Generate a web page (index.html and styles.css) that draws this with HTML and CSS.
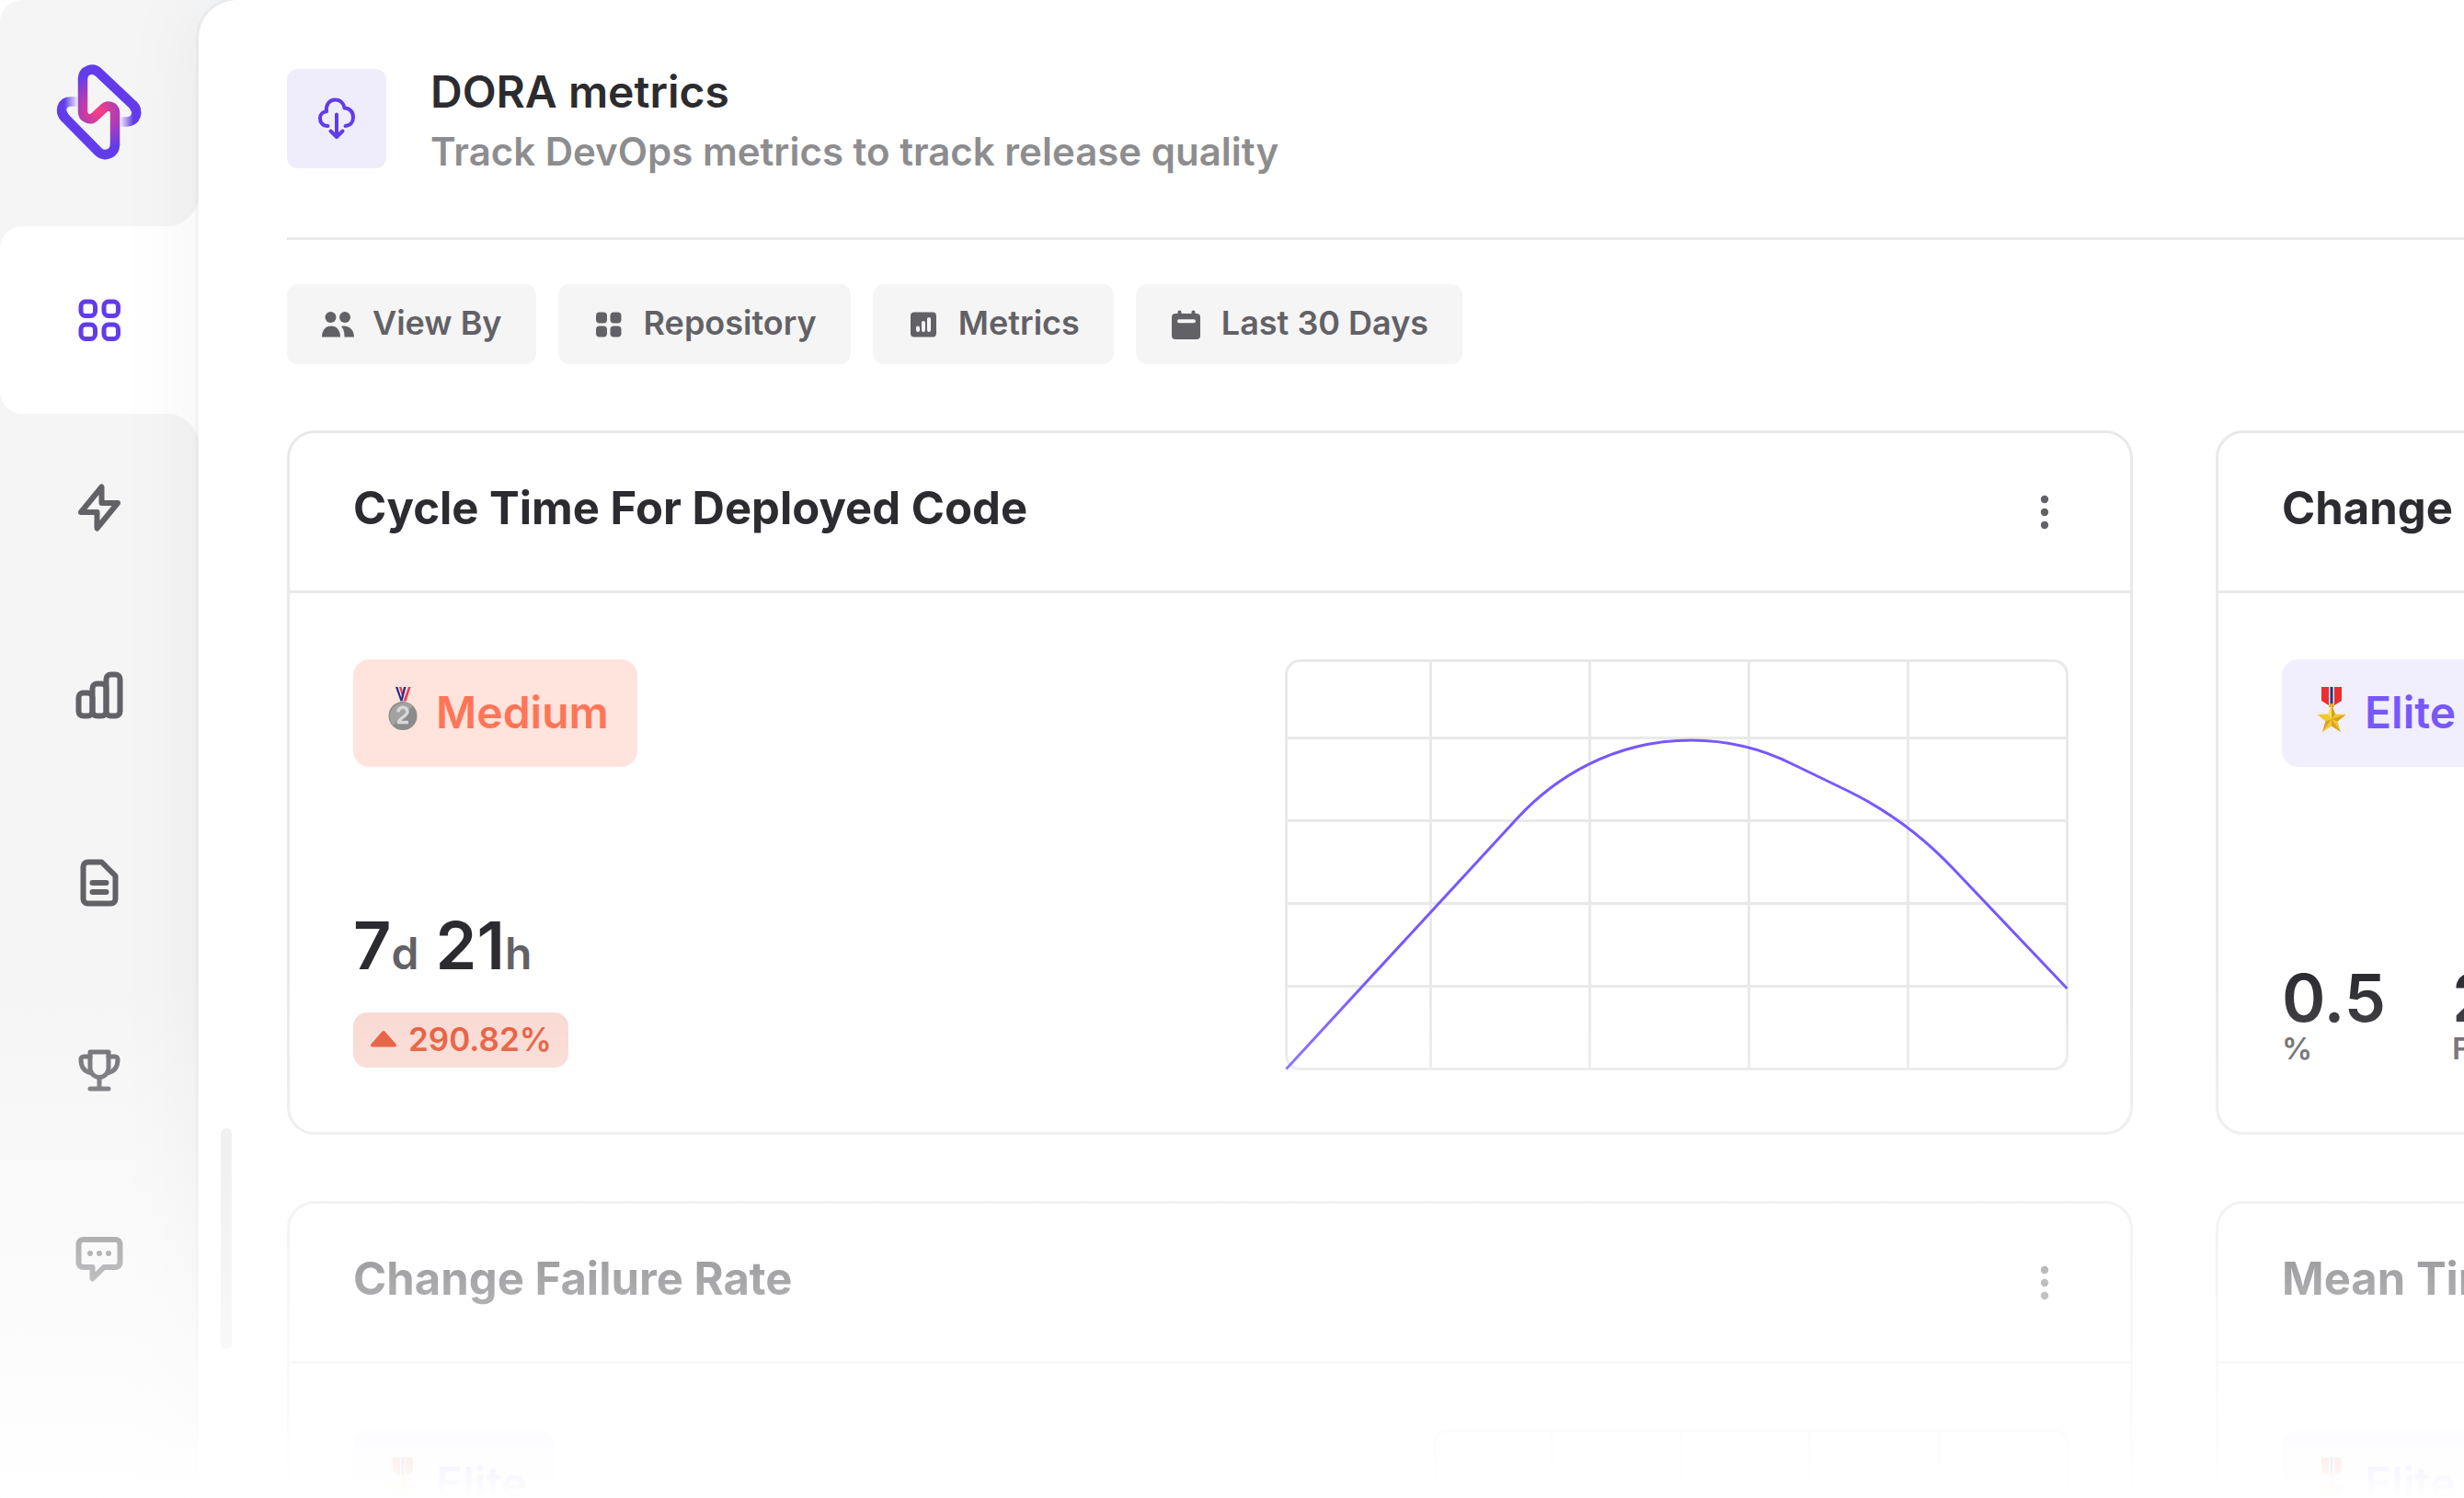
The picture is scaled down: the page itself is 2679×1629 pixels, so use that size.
FILE: index.html
```html
<!DOCTYPE html>
<html lang="en">
<head>
    <meta charset="UTF-8">
    <meta name="viewport" content="width=device-width, initial-scale=1.0">
    <title>DORA metrics</title>
    <link rel="stylesheet" href="styles.css">
</head>
<body>
    <!-- Shared drawings -->
    <svg class="sprite" aria-hidden="true">
        <symbol id="kebab" viewBox="0 0 48 48">
            <circle cx="24" cy="10" r="4.2"/>
            <circle cx="24" cy="24" r="4.2"/>
            <circle cx="24" cy="38" r="4.2"/>
        </symbol>
        <symbol id="star-medal" viewBox="0 0 36 56">
            <path d="M7 4h22v15l-8 5h-6l-8-5z" fill="#e92f2f"/>
            <path d="M15 4h6v20h-6z" fill="#e9e4ec"/>
            <path d="M16.500 4h3v20h-3z" fill="#26357f"/>
            <path d="M16 22h4l1 4h-6z" fill="#d9a520"/>
            <path d="M18 23l4 10.500 11.500 .5-9 7.500L28 53l-10-6.500L8 53l3.500-11.500-9-7.500 11.500-.5z" fill="#f3c72e"/>
            <path d="M18 39V23l4 10.500zM18 39l15.500-5-9 7.500zM18 39l10 14-10-6.500zM18 39L8 53l3.500-11.500z" fill="#d9a126"/>
            <path d="M18 39l-4-5.500L18 23z" fill="#ffe45c"/>
        </symbol>
        <symbol id="silver-medal" viewBox="0 0 36 56">
            <path d="M10 4h2.500l5 15.500h-2z" fill="#1f2f8f"/>
            <path d="M14 4h2.500l2.500 9-1 4z" fill="#ee3b46"/>
            <path d="M19 4h2.500l-4 15.500-1.500-3z" fill="#1f2f8f"/>
            <path d="M24 4h2.500l-5 15.500h-3z" fill="#ee3b46"/>
            <circle cx="18" cy="35.500" r="15.500" fill="#8b8b8b"/>
            <path d="M7 46A15.500 15.500 0 0 1 29 24.500z" fill="#a3a3a3"/>
            <path d="M13 31.500c0-7 10-7 10-.5 0 5-9.500 7-9.500 11.500H24" fill="none" stroke="#d8d8d8" stroke-width="3.500"/>
        </symbol>
        <symbol id="chart-grid" viewBox="0 0 852 447">
            <rect x="1.500" y="1.500" width="849" height="444" rx="15"/>
            <path d="M158.500 1.500v444M331.500 1.500v444M504.500 1.500v444M677.500 1.500v444"/>
            <path d="M1.500 85.500h849M1.500 175.500h849M1.500 265.500h849M1.500 355.500h849"/>
        </symbol>
    </svg>

    <div class="app">
        <aside class="sidebar">
            <a class="logo" href="#" aria-label="Home">
                <svg width="96" height="110" viewBox="60 66 96 110" fill="none" stroke-width="10.500">
                    <defs>
                        <radialGradient id="logo-core" gradientUnits="userSpaceOnUse" cx="107" cy="121" r="42">
                            <stop offset="0" stop-color="#ff3d7f"/>
                            <stop offset="1" stop-color="#623ceb"/>
                        </radialGradient>
                        <linearGradient id="logo-left" gradientUnits="userSpaceOnUse" x1="70" y1="0" x2="85" y2="0">
                            <stop offset="0" stop-color="#623ceb"/>
                            <stop offset="1" stop-color="#623ceb" stop-opacity="0"/>
                        </linearGradient>
                        <linearGradient id="logo-right" gradientUnits="userSpaceOnUse" x1="145" y1="0" x2="130" y2="0">
                            <stop offset="0" stop-color="#623ceb"/>
                            <stop offset="1" stop-color="#623ceb" stop-opacity="0"/>
                        </linearGradient>
                    </defs>
                    <path stroke="url(#logo-left)" d="M85 110.500h-8C67 110.500 64 121 71 128.500"/>
                    <path stroke="url(#logo-right)" d="M130 132.500h8C148 132.500 151.500 121 144.500 114"/>
                    <path stroke="#623ceb" d="M67.500 121c0 3 1 5 3.500 7.500L107 165c7 6.500 18 2 18-8"/>
                    <path stroke="#623ceb" d="M147.800 121c0-3-.8-4.500-3.300-7L107.500 79C101 72.500 90 76 90 86"/>
                    <path stroke="url(#logo-core)" d="M90 85v36c0 7.500 8 10.500 13 6l9-8.500c5-5.500 13-2.500 13 4.500v35"/>
                </svg>
            </a>
            <nav class="nav">
                <a class="nav-item active" href="#" aria-label="Dashboards">
                    <svg class="nav-icon thin" viewBox="0 0 60 60">
                        <rect x="10" y="10" width="15.500" height="15.500" rx="5"/>
                        <rect x="35" y="10" width="15.500" height="15.500" rx="5"/>
                        <rect x="10" y="35" width="15.500" height="15.500" rx="5"/>
                        <rect x="35" y="35" width="15.500" height="15.500" rx="5"/>
                    </svg>
                </a>
                <a class="nav-item" href="#" aria-label="Automation">
                    <svg class="nav-icon" viewBox="0 0 60 60">
                        <path d="M32.500 7.500V25H50L27.500 52.500V35H10z"/>
                    </svg>
                </a>
                <a class="nav-item" href="#" aria-label="Analytics">
                    <svg class="nav-icon" viewBox="0 0 60 60">
                        <rect x="7.500" y="27.500" width="15" height="25" rx="5"/>
                        <rect x="22.500" y="17.500" width="15" height="35" rx="5"/>
                        <rect x="37.500" y="7.500" width="15" height="45" rx="5"/>
                    </svg>
                </a>
                <a class="nav-item" href="#" aria-label="Reports">
                    <svg class="nav-icon" viewBox="0 0 60 60">
                        <path d="M12.500 12.500a5 5 0 0 1 5-5h15l15 15v25a5 5 0 0 1-5 5h-25a5 5 0 0 1-5-5z"/>
                        <path d="M22.500 30h15M22.500 40h15"/>
                    </svg>
                </a>
                <a class="nav-item" href="#" aria-label="Goals">
                    <svg class="nav-icon thin" viewBox="0 0 60 60">
                        <path d="M20 10h20v17.500a10 10 0 0 1-20 0z"/>
                        <path d="M20 15h-7a3 3 0 0 0-3 3c0 8 3.500 13 10 14.500M40 15h7a3 3 0 0 1 3 3c0 8-3.500 13-10 14.500"/>
                        <path d="M30 37.500V50M20 50h20"/>
                    </svg>
                </a>
                <a class="nav-item" href="#" aria-label="Messages">
                    <svg class="nav-icon" viewBox="0 0 60 60">
                        <path d="M12.500 10h35a5 5 0 0 1 5 5v20a5 5 0 0 1-5 5H35L22.500 52.500V40h-10a5 5 0 0 1-5-5V15a5 5 0 0 1 5-5z"/>
                        <path d="M20 25h.01M30 25h.01M40 25h.01"/>
                    </svg>
                </a>
            </nav>
        </aside>

        <main class="main">
            <div class="panel">
                <div class="scroll-thumb"></div>
                <header class="page-header">
                    <div class="page-icon">
                        <svg width="60" height="60" viewBox="0 0 60 60">
                            <path d="M20.500 38C14.500 38 12 34 12 29.500c0-4 3-7 7-7.200C18 15 22 9.500 28.500 9.500c5.500 0 9.500 4 10 9C44 18.500 48 22.500 48 28.500c0 5-3 9-8.500 9.500"/>
                            <path d="M30 25.500V50M23.500 43.500l6.500 6.500 6.500-6.500"/>
                        </svg>
                    </div>
                    <div class="page-heading">
                        <h1>DORA metrics</h1>
                        <p>Track DevOps metrics to track release quality</p>
                    </div>
                </header>

                <div class="filters">
                    <button type="button">
                        <svg width="36" height="36" viewBox="0 0 36 36">
                            <circle cx="11.500" cy="10" r="6"/>
                            <circle cx="27" cy="10" r="6"/>
                            <path d="M2 31.500c0-7.500 4-12 10-12s10 4.500 10 12z"/>
                            <path d="M23 20c8-2 14 3.500 14 11.500H26.500c0-5-.5-8-3.500-11.500z"/>
                        </svg>
                        <span>View By</span>
                    </button>
                    <button type="button">
                        <svg width="36" height="36" viewBox="0 0 36 36">
                            <rect x="5" y="4.500" width="12" height="12" rx="4"/>
                            <rect x="20.500" y="4.500" width="12" height="12" rx="4"/>
                            <rect x="5" y="19.500" width="12" height="12" rx="4"/>
                            <rect x="20.500" y="19.500" width="12" height="12" rx="4"/>
                        </svg>
                        <span>Repository</span>
                    </button>
                    <button type="button">
                        <svg width="36" height="36" viewBox="0 0 36 36">
                            <rect x="5" y="4.500" width="28" height="27" rx="4"/>
                            <path class="cut" d="M13 21.500V24M19 16v8M25 12v12"/>
                        </svg>
                        <span>Metrics</span>
                    </button>
                    <button type="button">
                        <svg width="36" height="36" viewBox="0 0 36 36">
                            <rect x="3" y="6" width="31" height="28" rx="4"/>
                            <path class="tab" d="M11.500 4.500V8M26.500 4.500V8"/>
                            <path class="cut" d="M11 14.200h16"/>
                        </svg>
                        <span>Last 30 Days</span>
                    </button>
                </div>

                <div class="cards">
                    <section class="card">
                        <div class="card-header">
                            <h2>Cycle Time For Deployed Code</h2>
                            <button type="button" class="more" aria-label="More options"><svg><use href="#kebab"/></svg></button>
                        </div>
                        <div class="card-body">
                            <div class="summary">
                                <span class="badge medium"><svg><use href="#silver-medal"/></svg>Medium</span>
                                <div class="totals">
                                    <p class="value">7<small>d</small> 21<small>h</small></p>
                                    <span class="change">
                                        <svg width="30" height="20" viewBox="0 0 30 20"><path d="M15 3L27 16.500H3z"/></svg>
                                        290.82%
                                    </span>
                                </div>
                            </div>
                            <svg class="chart" viewBox="0 0 852 447">
                                <use href="#chart-grid"/>
                                <path class="line" d="M1.500 445.500L252.500 173C292 130 356 88 442 88c40 0 76 9 110 26l60 29c43 21 83 51 115 85l123.500 130"/>
                            </svg>
                        </div>
                    </section>

                    <section class="card">
                        <div class="card-header">
                            <h2>Change</h2>
                        </div>
                        <div class="card-body">
                            <div class="summary">
                                <span class="badge elite"><svg><use href="#star-medal"/></svg>Elite</span>
                                <dl class="stats">
                                    <div><dd>0.5</dd><dt>%</dt></div>
                                    <div><dd>2</dd><dt>Failures</dt></div>
                                </dl>
                            </div>
                        </div>
                    </section>

                    <section class="card">
                        <div class="card-header">
                            <h2>Change Failure Rate</h2>
                            <button type="button" class="more" aria-label="More options"><svg><use href="#kebab"/></svg></button>
                        </div>
                        <div class="card-body">
                            <div class="summary">
                                <span class="badge elite"><svg><use href="#star-medal"/></svg>Elite</span>
                            </div>
                            <svg class="chart small" viewBox="0 0 852 447">
                                <use href="#chart-grid"/>
                            </svg>
                        </div>
                    </section>

                    <section class="card">
                        <div class="card-header">
                            <h2>Mean Time To Recovery</h2>
                        </div>
                        <div class="card-body">
                            <div class="summary">
                                <span class="badge elite"><svg><use href="#star-medal"/></svg>Elite</span>
                            </div>
                        </div>
                    </section>
                </div>
            </div>
        </main>
        <div class="fade"></div>
    </div>
</body>
</html>
```
FILE: styles.css
```css
* {
    box-sizing: border-box;
}
body {
    margin: 0;
    background: #ffffff;
    color: #2c2b30;
    font-family: Inter, "Liberation Sans", sans-serif;
}
h1, h2, p, dl, dd {
    margin: 0;
}
button {
    border: none;
    font-family: inherit;
    cursor: pointer;
}
.sprite {
    display: block;
    width: 0;
    height: 0;
}
.app {
    position: relative;
    display: flex;
    height: 100vh;
    overflow: hidden;
}

/* Sidebar */
.sidebar {
    flex: 0 0 216px;
    background: #f5f5f5;
    border-radius: 24px 0 0 0;
}
.logo {
    display: flex;
    justify-content: center;
    height: 246px;
    padding-top: 66px;
}
.nav-item {
    display: flex;
    align-items: center;
    justify-content: center;
    height: 204px;
    color: #626166;
}
.nav-item.active {
    position: relative;
    background: #ffffff;
    border-radius: 24px 0 0 24px;
    color: #623ceb;
}
/* rounded joins above and below the active item */
.nav-item.active::before,
.nav-item.active::after {
    content: "";
    position: absolute;
    right: 0;
    width: 36px;
    height: 36px;
}
.nav-item.active::before {
    bottom: 100%;
    background: radial-gradient(circle at 0 0, transparent 36px, #ffffff 37px);
}
.nav-item.active::after {
    top: 100%;
    background: radial-gradient(circle at 0 100%, transparent 36px, #ffffff 37px);
}
.nav-icon {
    width: 60px;
    height: 60px;
    fill: none;
    stroke: currentColor;
    stroke-width: 6;
    stroke-linecap: round;
    stroke-linejoin: round;
}
.nav-icon.thin {
    stroke-width: 5;
}

/* Content panel */
.main {
    flex: 1;
    min-width: 0;
    background: #f4f6f8;
}
.panel {
    position: relative;
    min-height: 110vh;
    margin: -3px 0 0 -3px;
    padding-left: 96px;
    background: #ffffff;
    background-clip: padding-box;
    border: 3px solid rgba(0, 0, 0, 0.04);
    border-right: none;
    border-radius: 45px 0 0 0;
    box-shadow: 0 0 96px rgba(0, 0, 0, 0.05);
}
.scroll-thumb {
    position: absolute;
    top: 1227px;
    left: 24px;
    width: 12px;
    height: 240px;
    border-radius: 6px;
    background: #e9e9e9;
}
.page-header {
    display: flex;
    align-items: center;
    gap: 48px;
    height: 261px;
    border-bottom: 3px solid #e9e9e9;
}
.page-icon {
    display: flex;
    align-items: center;
    justify-content: center;
    width: 108px;
    height: 108px;
    border-radius: 12px;
    background: #efedfb;
}
.page-icon svg {
    fill: none;
    stroke: #623ceb;
    stroke-width: 4;
    stroke-linecap: round;
    stroke-linejoin: round;
}
.page-heading {
    padding-top: 6px;
}
.page-heading h1 {
    font-size: 48px;
    font-weight: 600;
    line-height: 66px;
}
.page-heading p {
    color: #8d8d8f;
    font-size: 42px;
    font-weight: 600;
    line-height: 64px;
}

/* Filters */
.filters {
    display: flex;
    gap: 24px;
    padding: 48px 0 72px;
}
.filters button {
    display: flex;
    align-items: center;
    gap: 21px;
    height: 87px;
    padding: 0 37px 0 36px;
    border-radius: 12px;
    background: #f5f5f5;
    color: #626166;
    font-size: 36px;
    font-weight: 600;
    white-space: nowrap;
}
.filters span {
    padding-bottom: 3px;
}
.filters svg {
    flex: none;
    overflow: visible;
    fill: currentColor;
    stroke-linecap: round;
}
.filters .cut {
    stroke: #f5f5f5;
    stroke-width: 4;
}
.filters .tab {
    stroke: currentColor;
    stroke-width: 4;
}

/* Cards */
.cards {
    display: grid;
    grid-template-columns: repeat(2, calc(100% - 360px));
    gap: 72px 90px;
}
.card {
    display: flex;
    flex-direction: column;
    border: 3px solid #e9e9e9;
    border-radius: 30px;
    background: #ffffff;
}
.card-header {
    display: flex;
    align-items: center;
    justify-content: space-between;
    height: 174px;
    padding: 0 69px;
    border-bottom: 3px solid #e9e9e9;
}
.card-header h2 {
    padding-bottom: 8px;
    font-size: 49px;
    font-weight: 700;
    line-height: 60px;
    white-space: nowrap;
}
.more {
    width: 48px;
    height: 48px;
    padding: 0;
    background: none;
    color: #626166;
}
.more svg {
    display: block;
    width: 48px;
    height: 48px;
    fill: currentColor;
}
.card-body {
    flex: 1;
    display: flex;
    align-items: stretch;
    justify-content: space-between;
    padding: 72px 67px 67px 69px;
}
.summary {
    display: flex;
    flex-direction: column;
    align-items: flex-start;
    justify-content: space-between;
}
.badge {
    display: flex;
    align-items: center;
    gap: 18px;
    height: 117px;
    padding: 0 31px 3px 36px;
    border-radius: 18px;
    font-size: 48px;
    font-weight: 600;
}
.badge svg {
    width: 36px;
    height: 56px;
    margin-bottom: 6px;
}
.badge.medium {
    background: #ffe3dd;
    color: #ff7557;
}
.badge.elite {
    background: #f1effd;
    color: #7857ff;
}
.totals {
    padding-bottom: 3px;
}
.value {
    margin-bottom: 28px;
    font-size: 72px;
    font-weight: 600;
    line-height: 72px;
}
.value small {
    color: #626166;
    font-size: 48px;
    font-weight: 600;
}
.change {
    display: flex;
    align-items: center;
    gap: 12px;
    width: max-content;
    height: 60px;
    padding: 0 18px 3px;
    border-radius: 15px;
    background: #f8d8d0;
    color: #e5502e;
    font-size: 35px;
    font-weight: 600;
}
.change svg {
    fill: currentColor;
    stroke: currentColor;
    stroke-width: 4;
    stroke-linejoin: round;
}
.stats {
    display: flex;
    gap: 72px;
    padding-bottom: 4px;
}
.stats div {
    display: flex;
    flex-direction: column;
}
.stats dd {
    font-size: 72px;
    font-weight: 600;
    line-height: 72px;
}
.stats dt {
    color: #626166;
    font-size: 33px;
    font-weight: 600;
    line-height: 39px;
}
.chart {
    width: 852px;
    height: 447px;
    fill: none;
    stroke: #e9e9e9;
    stroke-width: 3;
}
.chart.small {
    width: 690px;
    height: 362px;
}
.chart .line {
    stroke: #7857ff;
}

/* The page dissolves into white towards the bottom */
.fade {
    position: absolute;
    right: 0;
    bottom: 0;
    left: 0;
    height: 570px;
    background: linear-gradient(rgba(255, 255, 255, 0), #ffffff);
    pointer-events: none;
}
```
